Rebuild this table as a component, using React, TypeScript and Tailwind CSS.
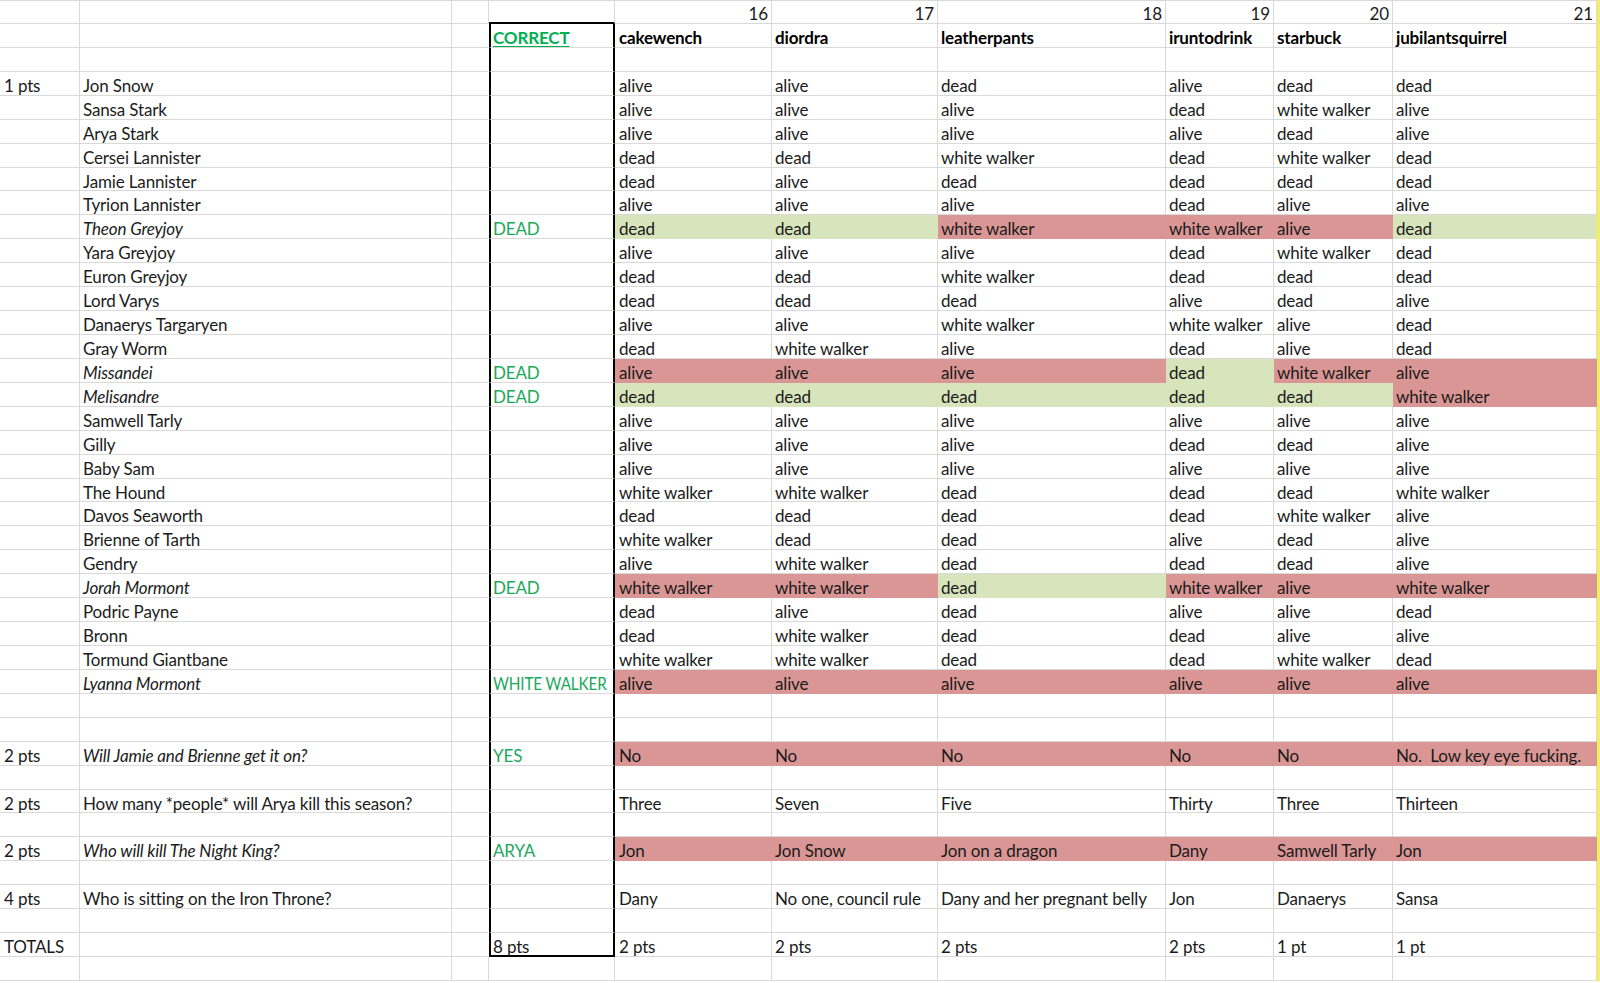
const players = ["cakewench", "diordra", "leatherpants", "iruntodrink", "starbuck", "jubilantsquirrel"];
const nums = ["16", "17", "18", "19", "20", "21"];

// value:fill  (g = right guess, r = wrong guess)
const characters: [string, string, string[]][] = [
  ["Jon Snow", "", ["alive", "alive", "dead", "alive", "dead", "dead"]],
  ["Sansa Stark", "", ["alive", "alive", "alive", "dead", "white walker", "alive"]],
  ["Arya Stark", "", ["alive", "alive", "alive", "alive", "dead", "alive"]],
  ["Cersei Lannister", "", ["dead", "dead", "white walker", "dead", "white walker", "dead"]],
  ["Jamie Lannister", "", ["dead", "alive", "dead", "dead", "dead", "dead"]],
  ["Tyrion Lannister", "", ["alive", "alive", "alive", "dead", "alive", "alive"]],
  ["Theon Greyjoy", "DEAD", ["dead:g", "dead:g", "white walker:r", "white walker:r", "alive:r", "dead:g"]],
  ["Yara Greyjoy", "", ["alive", "alive", "alive", "dead", "white walker", "dead"]],
  ["Euron Greyjoy", "", ["dead", "dead", "white walker", "dead", "dead", "dead"]],
  ["Lord Varys", "", ["dead", "dead", "dead", "alive", "dead", "alive"]],
  ["Danaerys Targaryen", "", ["alive", "alive", "white walker", "white walker", "alive", "dead"]],
  ["Gray Worm", "", ["dead", "white walker", "alive", "dead", "alive", "dead"]],
  ["Missandei", "DEAD", ["alive:r", "alive:r", "alive:r", "dead:g", "white walker:r", "alive:r"]],
  ["Melisandre", "DEAD", ["dead:g", "dead:g", "dead:g", "dead:g", "dead:g", "white walker:r"]],
  ["Samwell Tarly", "", ["alive", "alive", "alive", "alive", "alive", "alive"]],
  ["Gilly", "", ["alive", "alive", "alive", "dead", "dead", "alive"]],
  ["Baby Sam", "", ["alive", "alive", "alive", "alive", "alive", "alive"]],
  ["The Hound", "", ["white walker", "white walker", "dead", "dead", "dead", "white walker"]],
  ["Davos Seaworth", "", ["dead", "dead", "dead", "dead", "white walker", "alive"]],
  ["Brienne of Tarth", "", ["white walker", "dead", "dead", "alive", "dead", "alive"]],
  ["Gendry", "", ["alive", "white walker", "dead", "dead", "dead", "alive"]],
  ["Jorah Mormont", "DEAD", ["white walker:r", "white walker:r", "dead:g", "white walker:r", "alive:r", "white walker:r"]],
  ["Podric Payne", "", ["dead", "alive", "dead", "alive", "alive", "dead"]],
  ["Bronn", "", ["dead", "white walker", "dead", "dead", "alive", "alive"]],
  ["Tormund Giantbane", "", ["white walker", "white walker", "dead", "dead", "white walker", "dead"]],
  ["Lyanna Mormont", "WHITE WALKER", ["alive:r", "alive:r", "alive:r", "alive:r", "alive:r", "alive:r"]],
];

type Row = { a?: string; b?: string; italic?: boolean; answer?: string; vals?: string[]; kind?: string };

const rows: Row[] = [
  { kind: "nums" },
  { kind: "head" },
  {},
  ...characters.map(([name, answer, vals], i) => ({
    a: i === 0 ? "1 pts" : "",
    b: name,
    italic: answer !== "",
    answer,
    vals,
  })),
  {},
  {},
  {
    a: "2 pts",
    b: "Will Jamie and Brienne get it on?",
    italic: true,
    answer: "YES",
    vals: ["No:r", "No:r", "No:r", "No:r", "No:r", "No.  Low key eye fucking.:r"],
  },
  {},
  {
    a: "2 pts",
    b: "How many *people* will Arya kill this season?",
    vals: ["Three", "Seven", "Five", "Thirty", "Three", "Thirteen"],
  },
  {},
  {
    a: "2 pts",
    b: "Who will kill The Night King?",
    italic: true,
    answer: "ARYA",
    vals: ["Jon:r", "Jon Snow:r", "Jon on a dragon:r", "Dany:r", "Samwell Tarly:r", "Jon:r"],
  },
  {},
  {
    a: "4 pts",
    b: "Who is sitting on the Iron Throne?",
    vals: ["Dany", "No one, council rule", "Dany and her pregnant belly", "Jon", "Danaerys", "Sansa"],
  },
  {},
  { a: "TOTALS", kind: "totals", vals: ["2 pts", "2 pts", "2 pts", "2 pts", "1 pt", "1 pt"] },
  {},
];

function fillOf(v: string) {
  if (v.endsWith(":g")) return { text: v.slice(0, -2), cls: "bg-[#d8e4bc] border-[#d8e4bc]" };
  if (v.endsWith(":r")) return { text: v.slice(0, -2), cls: "bg-[#da9694] border-[#da9694]" };
  return { text: v, cls: "border-[#d9d9d9]" };
}

export default function App() {
  const last = rows.length - 2;
  return (
    <div
      className="w-[1600px] h-[983px] overflow-hidden bg-white text-[17px] tracking-[-0.15px] text-[#1b1b1b]"
      style={{ fontFamily: "Lato, 'Open Sans', sans-serif" }}
    >
      <div className="grid grid-cols-[80px_372px_37px_126px_157px_166px_228px_108px_119px_204px_3px]">
        {rows.map((r, ri) => {
          const inBox = ri >= 1 && ri <= last;
          const base =
            ri === 0
              ? "h-6 pt-[3px] leading-5 whitespace-pre border-b border-t"
              : "h-[23.93px] pt-1 leading-5 whitespace-pre border-b";
          const cells = [];
          cells.push(
            <div key="a" className={`${base} border-r border-[#d9d9d9] pl-[4px]`}>
              {r.a}
            </div>
          );
          cells.push(
            <div key="b" className={`${base} border-r border-[#d9d9d9] pl-[3px] ${r.italic ? "italic" : ""}`}>
              {r.b}
            </div>
          );
          cells.push(
            <div
              key="c"
              className={`${base} border-r border-[#d9d9d9] ${inBox ? "border-r-transparent" : ""}`}
            />
          );
          let dText: React.ReactNode = r.answer;
          if (r.answer === "WHITE WALKER")
            dText = <span className="inline-block origin-left scale-x-[0.9]">WHITE WALKER</span>;
          if (r.kind === "head")
            dText = <span className="font-bold text-[#00b050] underline underline-offset-2">CORRECT</span>;
          if (r.kind === "totals") dText = "8 pts";
          cells.push(
            <div
              key="d"
              className={`${base} pl-[2px] text-[#1aa85a] ${
                inBox
                  ? "border-x-2 border-x-black border-b-[#d9d9d9]"
                  : "border-r border-[#d9d9d9]"
              } ${ri === 0 ? "border-b-2 border-b-black" : ""} ${ri === last ? "border-b-2 border-b-black text-[#1b1b1b]" : ""}`}
            >
              {dText}
            </div>
          );
          players.forEach((p, pi) => {
            const pad = pi === 0 ? "pl-[4px]" : "pl-[3px]";
            if (r.kind === "nums") {
              cells.push(
                <div key={p} className={`${base} border-r border-[#d9d9d9] pr-[3px] text-right`}>
                  {nums[pi]}
                </div>
              );
            } else if (r.kind === "head") {
              cells.push(
                <div key={p} className={`${base} border-r border-[#d9d9d9] ${pad} font-bold text-black`}>
                  {p}
                </div>
              );
            } else {
              const f = fillOf(r.vals ? r.vals[pi] : "");
              cells.push(
                <div key={p} className={`${base} border-r ${f.cls} ${pad}`}>
                  {f.text}
                </div>
              );
            }
          });
          cells.push(<div key="edge" className={`${ri === 0 ? "h-6" : "h-[23.93px]"} bg-[#f3ee62]`} />);
          return cells;
        })}
      </div>
    </div>
  );
}
